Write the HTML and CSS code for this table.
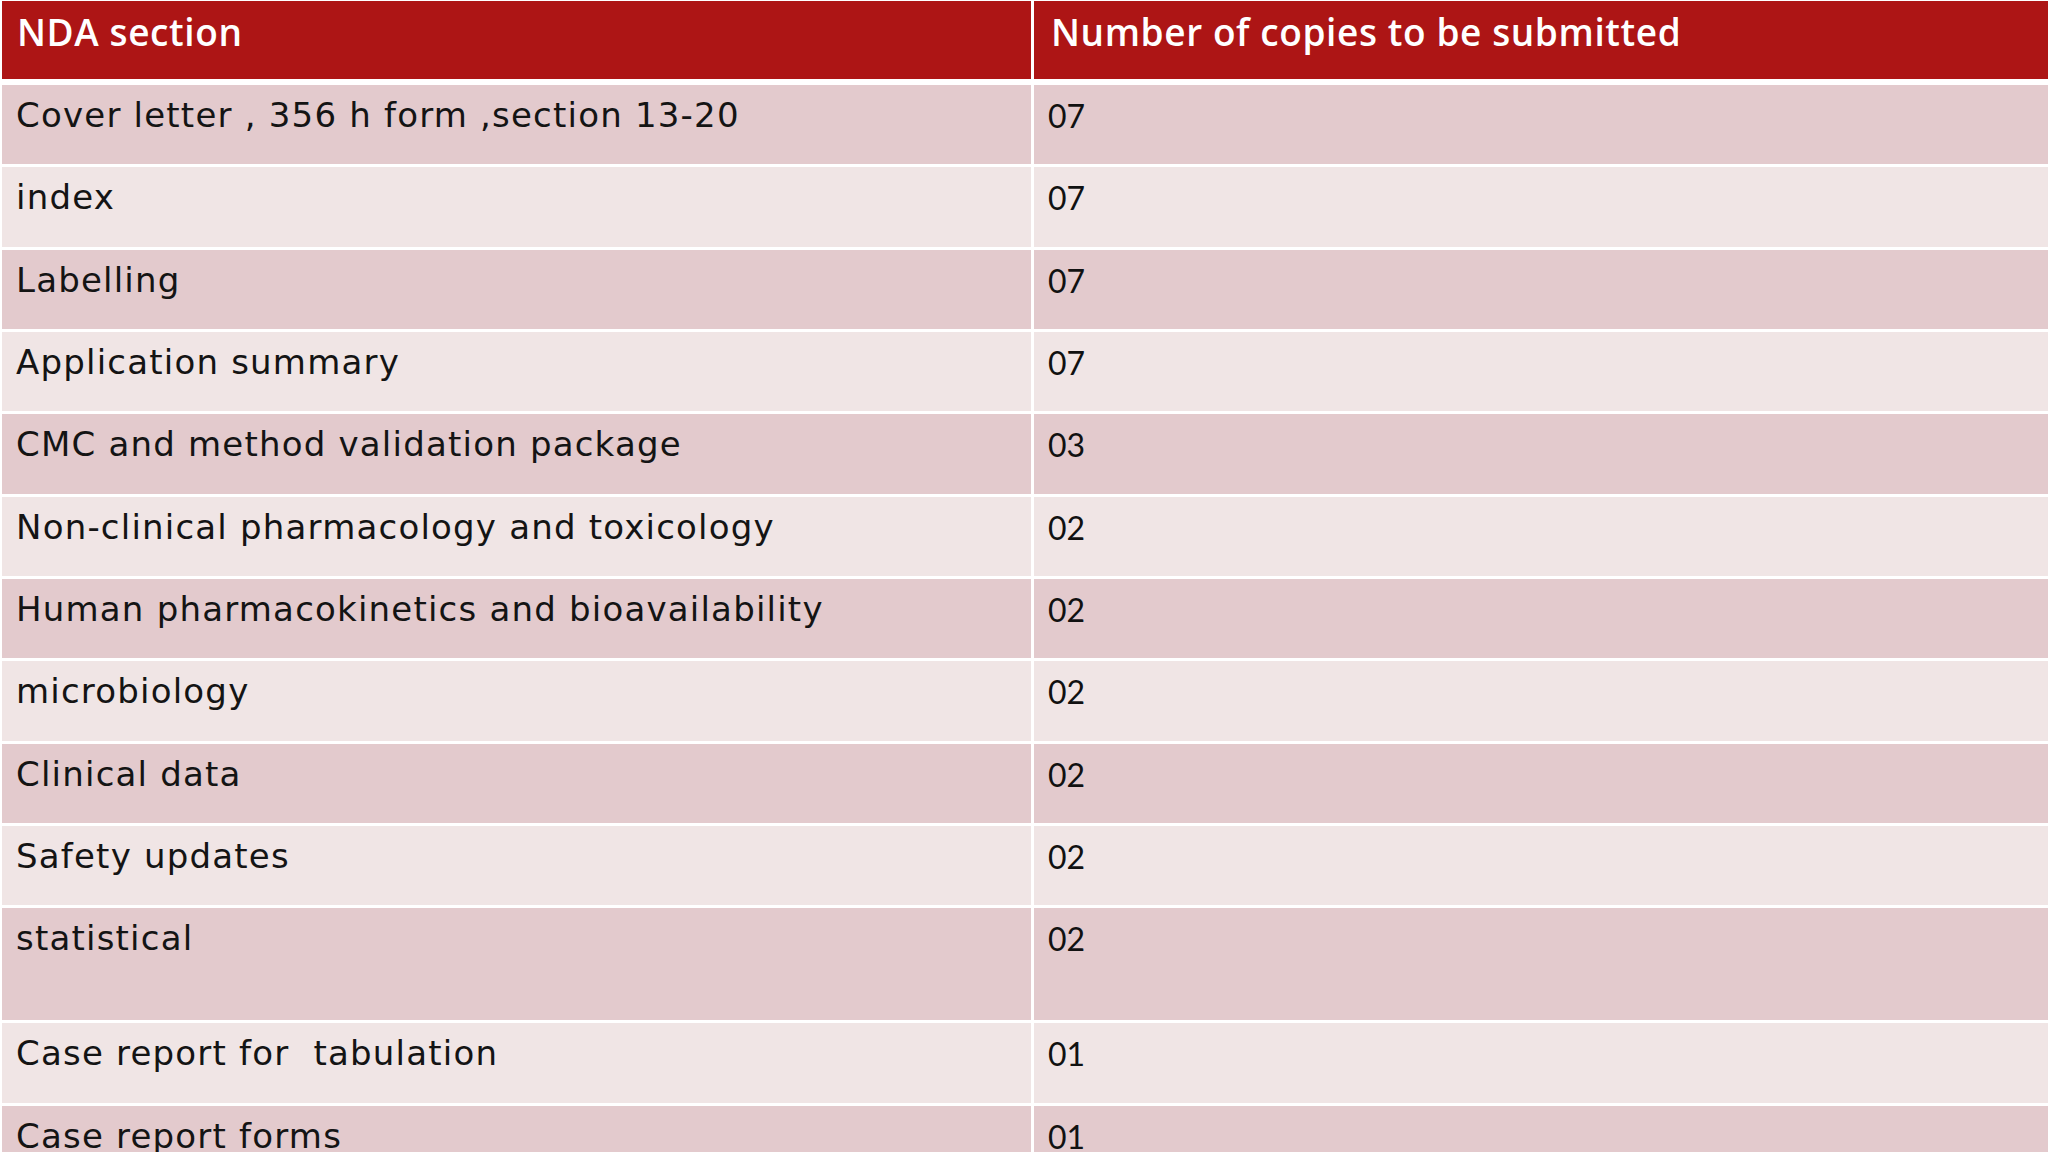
FILE: index.html
```html
<!DOCTYPE html>
<html lang="en">
<head>
<meta charset="utf-8">
<title>NDA section copies</title>
<link rel="stylesheet" href="styles.css">
</head>
<body>
<div class="sheet">
  <div class="table">
    <div class="cell head">NDA section</div>
    <div class="cell head head-right">Number of copies to be submitted</div>

    <div class="cell odd label">Cover letter , 356 h form ,section 13-20</div>
    <div class="cell odd num">07</div>

    <div class="cell even label">index</div>
    <div class="cell even num">07</div>

    <div class="cell odd label">Labelling</div>
    <div class="cell odd num">07</div>

    <div class="cell even label">Application summary</div>
    <div class="cell even num">07</div>

    <div class="cell odd label">CMC and method validation package</div>
    <div class="cell odd num">03</div>

    <div class="cell even label">Non-clinical pharmacology and toxicology</div>
    <div class="cell even num">02</div>

    <div class="cell odd label">Human pharmacokinetics and bioavailability</div>
    <div class="cell odd num">02</div>

    <div class="cell even label">microbiology</div>
    <div class="cell even num">02</div>

    <div class="cell odd label">Clinical data</div>
    <div class="cell odd num">02</div>

    <div class="cell even label">Safety updates</div>
    <div class="cell even num">02</div>

    <div class="cell odd label">statistical</div>
    <div class="cell odd num">02</div>

    <div class="cell even label">Case report for &nbsp;tabulation</div>
    <div class="cell even num">01</div>

    <div class="cell odd label">Case report forms</div>
    <div class="cell odd num">01</div>
  </div>
</div>
</body>
</html>
```

FILE: styles.css
```css
html, body {
  margin: 0;
  padding: 0;
  background: #ffffff;
  overflow: hidden;
}

.sheet {
  width: 2048px;
  height: 1152px;
  overflow: hidden;
  padding: 1px 0 0 2px;
  box-sizing: border-box;
}

.table {
  display: grid;
  grid-template-columns: 1029px 1fr;
  grid-template-rows: 81px repeat(10, 79.33px) 112px 79.33px 79.33px;
  column-gap: 3px;
  row-gap: 3px;
}

.cell {
  box-sizing: border-box;
  padding-left: 14px;
  color: #111111;
  white-space: nowrap;
  overflow: hidden;
}

.head {
  background: #ad1515;
  background-clip: padding-box;
  border-bottom: 3px solid #ffffff;
  color: #ffffff;
  font-family: "Open Sans", Lato, sans-serif;
  font-weight: 600;
  font-size: 37px;
  letter-spacing: 0.6px;
  line-height: 44px;
  padding-top: 9px;
  padding-left: 15px;
}

.head-right {
  padding-left: 17px;
}

.odd {
  background: #e3cacd;
}

.even {
  background: #f0e5e5;
}

.label {
  font-family: "DejaVu Sans", Lato, sans-serif;
  font-weight: 400;
  font-size: 34px;
  letter-spacing: 1.2px;
  line-height: 40px;
  padding-top: 10px;
  padding-left: 14px;
  color: #141414;
}

.num {
  font-family: Lato, "Open Sans", sans-serif;
  font-size: 32px;
  line-height: 38px;
  padding-top: 12px;
}
```
